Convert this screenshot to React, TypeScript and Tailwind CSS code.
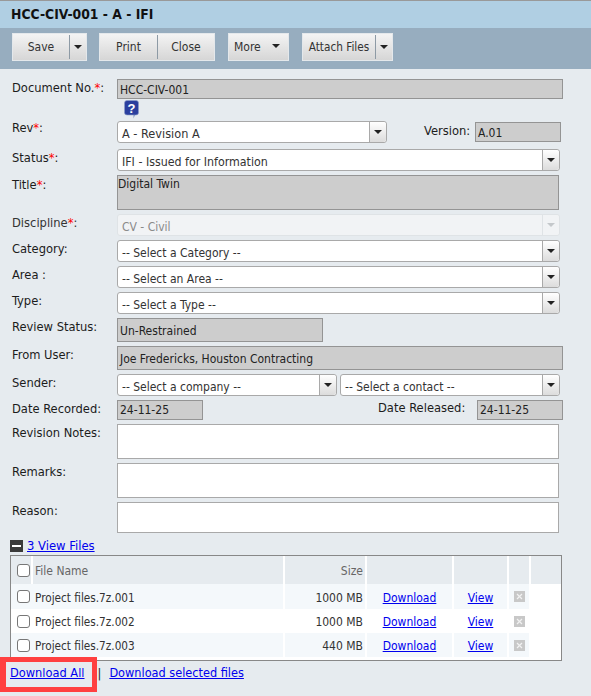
import React from "react";

const Req = () => <span className="text-[#ff0000]">*</span>;

function Label({ children, pt = "pt-[1px]" }: { children: React.ReactNode; pt?: string }) {
  return <div className={`w-[105px] shrink-0 ${pt} text-[12.8px] leading-[15px] text-[#1c1c1c] whitespace-nowrap`}>{children}</div>;
}

function Caret({ color = "#222" }: { color?: string }) {
  return (
    <svg width="8" height="4" viewBox="0 0 8 4">
      <path d="M0 0H8L4 4Z" fill={color} />
    </svg>
  );
}

function Select({ text, w, disabled, size = "text-[12px]", lead = "leading-[25px]" }: { text: string; w: string; disabled?: boolean; size?: string; lead?: string }) {
  return (
    <div
      className={`${w} h-[22px] flex items-stretch rounded-[3px] border ${
        disabled ? "border-[#dfe3e6] bg-[#f1f3f5] text-[#8a8a8a]" : "border-[#a9a9a9] bg-white text-[#333]"
      }`}
    >
      <div className={`flex-1 min-w-0 pl-[4px] ${size} ${lead} whitespace-nowrap overflow-hidden`}>{text}</div>
      <div
        className={`w-[17px] flex items-center justify-center border-l rounded-r-[3px] ${
          disabled ? "border-[#dfe3e6] bg-[#f1f3f5]" : "border-[#a9a9a9] bg-gradient-to-b from-white to-[#dcdcdc]"
        }`}
      >
        <Caret color={disabled ? "#c4c8cb" : "#222"} />
      </div>
    </div>
  );
}

function ReadOnly({ text, w, h = "h-[20px]", lead = "leading-[20px]" }: { text: string; w: string; h?: string; lead?: string }) {
  return (
    <div className={`${w} ${h} ${lead} border border-[#949494] bg-[#cdcdcd] pl-[2px] text-[12px] text-[#222] whitespace-nowrap`}>
      {text}
    </div>
  );
}

function TBtn({ children, w, divider }: { children: React.ReactNode; w: string; divider?: boolean }) {
  return (
    <div className={`${w} h-full flex items-center justify-center text-[12px] text-[#333] ${divider ? "border-l border-[#8d9aa5]" : ""}`}>
      {children}
    </div>
  );
}

function BtnGroup({ children }: { children: React.ReactNode }) {
  return (
    <div className="h-[28px] flex items-stretch py-[1px] border border-[#e4e8eb] bg-gradient-to-b from-[#f4f4f4] to-[#d6d6d6]">
      {children}
    </div>
  );
}

function Check() {
  return <div className="w-[13px] h-[13px] shrink-0 rounded-[3px] border border-[#777] bg-white" />;
}

function FileRow({ name, size, alt, h }: { name: string; size: string; alt: boolean; h: string }) {
  const bg = alt ? "bg-[#f4f8fb]" : "bg-white";
  return (
    <div className={`flex ${h} text-[12px] text-[#333] items-stretch`}>
      <div className={`w-[272px] flex items-center ${bg}`}>
        <div className="ml-[6px] mr-[5px]"><Check /></div>
        <span className="text-[11.7px] pt-[4px]">{name}</span>
      </div>
      <div className={`ml-[2px] w-[80px] flex items-center justify-end pr-[2px] pt-[2px] ${bg}`}>{size}</div>
      <div className={`ml-[2px] w-[85px] flex items-center justify-center pt-[2px] ${bg}`}>
        <span className="text-[#0000ee] underline">Download</span>
      </div>
      <div className={`ml-[2px] w-[53px] flex items-center justify-center pt-[2px] ${bg}`}>
        <span className="text-[#0000ee] underline">View</span>
      </div>
      <div className={`ml-[2px] w-[20px] flex items-center justify-center ${bg}`}>
        <svg width="11" height="11" viewBox="0 0 11 11">
          <rect width="11" height="11" fill="#c8c8c8" />
          <path d="M3 3L8 8M8 3L3 8" stroke="#f2f2f2" strokeWidth="1.2" />
        </svg>
      </div>
    </div>
  );
}

function HeadCell({ w, children, cls = "" }: { w: string; children?: React.ReactNode; cls?: string }) {
  return <div className={`${w} ${cls} bg-[#e6ebef] h-full`}>{children}</div>;
}

export default function App() {
  return (
    <div
      className="w-[591px] h-[696px] overflow-hidden bg-[#e6ebef] relative"
      style={{ fontFamily: '"DejaVu Sans Condensed", "DejaVu Sans", sans-serif' }}
    >
      <div className="h-[28px] bg-[#b0cfe3] border-t border-[#999] flex items-center pl-[11px] text-[13.8px] font-bold text-[#111]">
        HCC-CIV-001 - A - IFI
      </div>
      <div className="h-[41px] bg-[#97adbf] flex items-start pt-[5px] pl-[12px]">
        <BtnGroup>
          <TBtn w="w-[56px]">Save</TBtn>
          <TBtn w="w-[17px]" divider><Caret /></TBtn>
        </BtnGroup>
        <div className="ml-[12px]">
          <BtnGroup>
            <TBtn w="w-[57px]">Print</TBtn>
            <TBtn w="w-[57px]" divider>Close</TBtn>
          </BtnGroup>
        </div>
        <div className="ml-[13px]">
          <BtnGroup>
            <div className="w-[59px] h-full flex items-center justify-between pl-[5px] pr-[8px] text-[12px] text-[#333]">
              More <span className="-mt-[3px] flex"><Caret /></span>
            </div>
          </BtnGroup>
        </div>
        <div className="ml-[13px]">
          <BtnGroup>
            <TBtn w="w-[72px]"><span className="text-[11.7px] pt-[2px]">Attach Files</span></TBtn>
            <TBtn w="w-[17px]" divider><Caret /></TBtn>
          </BtnGroup>
        </div>
      </div>

      <div className="pl-[12px]">
        <div className="flex mt-[10px] h-[20px] items-start">
          <Label>Document No.<Req />:</Label>
          <ReadOnly text="HCC-CIV-001" w="w-[446px]" />
        </div>
        <div className="h-[22px] pl-[112px] pt-[1px]">
          <svg width="15" height="19" viewBox="0 0 15 19">
            <rect x="0.5" y="0.5" width="14" height="14.5" rx="2.5" fill="#2b3f9e" stroke="#8fa0c8" strokeWidth="0.6" />
            <path d="M9.5 15V18.5L11 15Z" fill="#7d8fc0" />
            <text x="7.5" y="12.5" textAnchor="middle" fontSize="13" fontWeight="bold" fill="#fff" fontFamily="Liberation Sans, sans-serif">?</text>
          </svg>
        </div>
        <div className="flex h-[24px] items-start">
          <Label pt="-mt-[1px]">Rev<Req />:</Label>
          <Select text="A - Revision A" w="w-[270px]" size="text-[12.6px]" lead="leading-[23px]" />
          <div className="ml-[37px] mt-[2px] w-[51px] text-[12.8px] leading-[15px] text-[#1c1c1c]">Version:</div>
          <div className="mt-[1px]"><ReadOnly text="A.01" w="w-[86px]" /></div>
        </div>
        <div className="flex mt-[4px] h-[22px] items-start">
          <Label>Status<Req />:</Label>
          <Select text="IFI - Issued for Information" w="w-[443px]" size="text-[12.3px]" />
        </div>
        <div className="flex mt-[4px] h-[35px] items-start">
          <Label pt="pt-[2px]">Title<Req />:</Label>
          <div className="w-[442px] h-[35px] border border-[#949494] bg-[#cdcdcd] pt-[1px] text-[12px] leading-[15px] text-[#222]">Digital Twin</div>
        </div>
        <div className="flex mt-[4px] h-[22px] items-start">
          <Label><span className="text-[#333]">Discipline<Req />:</span></Label>
          <Select text="CV - Civil" w="w-[443px]" disabled />
        </div>
        <div className="flex mt-[4px] h-[22px] items-start">
          <Label>Category:</Label>
          <Select text="-- Select a Category --" w="w-[443px]" />
        </div>
        <div className="flex mt-[4px] h-[22px] items-start">
          <Label>Area :</Label>
          <Select text="-- Select an Area --" w="w-[443px]" />
        </div>
        <div className="flex mt-[4px] h-[22px] items-start">
          <Label>Type:</Label>
          <Select text="-- Select a Type --" w="w-[443px]" />
        </div>
        <div className="flex mt-[4px] h-[24px] items-start">
          <Label>Review Status:</Label>
          <ReadOnly text="Un-Restrained" w="w-[206px]" h="h-[24px]" lead="leading-[25px]" />
        </div>
        <div className="flex mt-[4px] h-[24px] items-start">
          <Label>From User:</Label>
          <ReadOnly text="Joe Fredericks, Houston Contracting" w="w-[446px]" h="h-[24px]" lead="leading-[25px]" />
        </div>
        <div className="flex mt-[4px] h-[22px] items-start">
          <Label>Sender:</Label>
          <Select text="-- Select a company --" w="w-[220px]" />
          <div className="ml-[3px]"><Select text="-- Select a contact --" w="w-[220px]" /></div>
        </div>
        <div className="flex mt-[4px] h-[20px] items-start">
          <Label>Date Recorded:</Label>
          <ReadOnly text="24-11-25" w="w-[86px]" lead="leading-[19px]" />
          <div className="ml-[175px] w-[99px] text-[12.8px] leading-[15px] text-[#1c1c1c] whitespace-nowrap">Date Released:</div>
          <ReadOnly text="24-11-25" w="w-[86px]" lead="leading-[19px]" />
        </div>
        <div className="flex mt-[4px] h-[35px] items-start">
          <Label>Revision Notes:</Label>
          <div className="w-[442px] h-[35px] border border-[#a9a9a9] bg-white" />
        </div>
        <div className="flex mt-[4px] h-[35px] items-start">
          <Label>Remarks:</Label>
          <div className="w-[442px] h-[35px] border border-[#a9a9a9] bg-white" />
        </div>
        <div className="flex mt-[4px] h-[31px] items-start">
          <Label>Reason:</Label>
          <div className="w-[442px] h-[31px] border border-[#a9a9a9] bg-white" />
        </div>
      </div>

      <div className="pl-[10px]">
        <div className="flex items-center h-[16px] mt-[5px] text-[12.9px]">
          <svg width="13" height="13" viewBox="0 0 13 13" className="mr-[4px]">
            <rect width="13" height="12" fill="#3a3a3a" />
            <rect x="2" y="5" width="9" height="2" fill="#fff" />
          </svg>
          <span className="text-[#0000ee] underline">3 View Files</span>
        </div>
        <div className="mt-[1px] w-[552px] h-[106px] border border-[#888] bg-white">
          <div className="flex h-[28px] text-[12px] text-[#666] leading-[31px]">
            <HeadCell w="w-[20px]" cls="flex items-center pl-[6px]"><Check /></HeadCell>
            <HeadCell w="w-[250px]" cls="ml-[2px] pl-[2px]">File Name</HeadCell>
            <HeadCell w="w-[80px]" cls="ml-[2px] text-right pr-[2px]">Size</HeadCell>
            <HeadCell w="w-[85px]" cls="ml-[2px]" />
            <HeadCell w="w-[53px]" cls="ml-[2px]" />
            <HeadCell w="w-[20px]" cls="ml-[2px]" />
            <HeadCell w="w-[30px]" cls="ml-[2px]" />
          </div>
          <FileRow name="Project files.7z.001" size="1000 MB" alt h="h-[25px]" />
          <FileRow name="Project files.7z.002" size="1000 MB" alt={false} h="h-[24px]" />
          <FileRow name="Project files.7z.003" size="440 MB" alt h="h-[24px]" />
        </div>
        <div className="flex items-center h-[16px] mt-[4px] text-[12.7px] text-[#222]">
          <span className="text-[#0000ee] underline">Download All</span>
          <span className="ml-[13px] mr-[8px]">|</span>
          <span className="text-[12.6px] text-[#0000ee] underline">Download selected files</span>
        </div>
      </div>

      <div className="absolute left-0 top-[657px] w-[97px] h-[35px] border-[5px] border-l-[6px] border-[#ff4040]" />
    </div>
  );
}
